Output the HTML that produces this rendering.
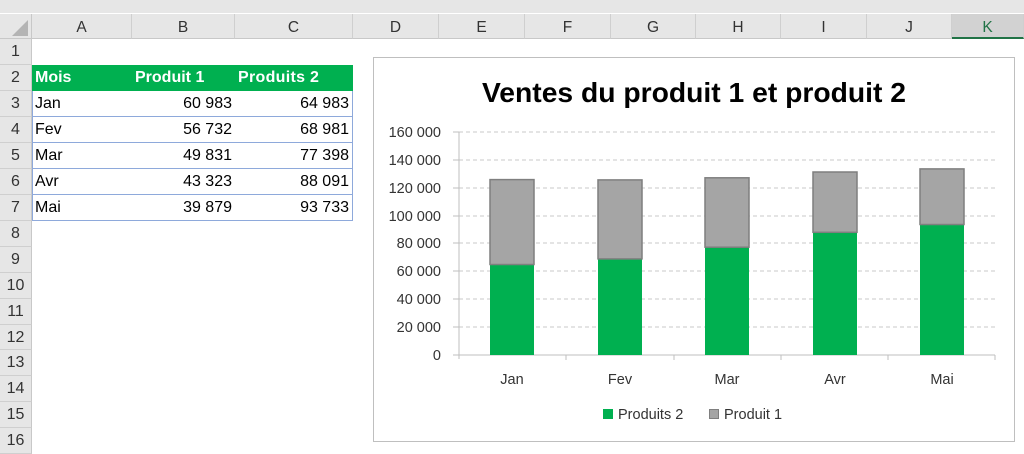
<!DOCTYPE html>
<html><head><meta charset="utf-8"><style>
*{margin:0;padding:0;box-sizing:border-box}
body{width:1024px;height:449px;overflow:hidden;background:#fff;font-family:"Liberation Sans",Arial,sans-serif;position:relative}
.abs{position:absolute}
.ch{position:absolute;top:14px;height:25px;background:#e6e6e6;border-right:1px solid #cfcfcf;font-size:15.5px;color:#333;text-align:center;line-height:27px;border-bottom:1px solid #c8c8c8}
.rh{position:absolute;left:0;width:32px;background:#e6e6e6;border-bottom:1px solid #cfcfcf;border-right:1px solid #c8c8c8;font-size:16px;color:#333;text-align:center}
.cell{position:absolute;font-size:16px;color:#000;line-height:26px;height:26px}
</style></head><body>
<div class="abs" style="left:0;top:0;width:1024px;height:14px;background:#e6e6e6;border-bottom:1px solid #fff"></div>
<div class="abs" style="left:0;top:14px;width:32px;height:25px;background:#e6e6e6;border-right:1px solid #c8c8c8;border-bottom:1px solid #c8c8c8"></div>
<svg class="abs" style="left:10px;top:20px" width="18" height="16"><polygon points="18,0 18,16 2,16" fill="#b4b4b4"/></svg>
<div class="ch" style="left:32px;width:100px">A</div>
<div class="ch" style="left:132px;width:103px">B</div>
<div class="ch" style="left:235px;width:118px">C</div>
<div class="ch" style="left:353px;width:86px">D</div>
<div class="ch" style="left:439px;width:86px">E</div>
<div class="ch" style="left:525px;width:86px">F</div>
<div class="ch" style="left:611px;width:85px">G</div>
<div class="ch" style="left:696px;width:85px">H</div>
<div class="ch" style="left:781px;width:86px">I</div>
<div class="ch" style="left:867px;width:85px">J</div>
<div class="ch" style="left:952px;width:72px;background:#d2d2d2;color:#217346;border-bottom:2px solid #217346">K</div>

<div class="rh" style="top:39px;height:26px;line-height:26px">1</div>
<div class="rh" style="top:65px;height:26px;line-height:26px">2</div>
<div class="rh" style="top:91px;height:26px;line-height:26px">3</div>
<div class="rh" style="top:117px;height:26px;line-height:26px">4</div>
<div class="rh" style="top:143px;height:26px;line-height:26px">5</div>
<div class="rh" style="top:169px;height:26px;line-height:26px">6</div>
<div class="rh" style="top:195px;height:26px;line-height:26px">7</div>
<div class="rh" style="top:221px;height:26px;line-height:26px">8</div>
<div class="rh" style="top:247px;height:26px;line-height:26px">9</div>
<div class="rh" style="top:273px;height:26px;line-height:26px">10</div>
<div class="rh" style="top:299px;height:26px;line-height:26px">11</div>
<div class="rh" style="top:325px;height:25px;line-height:25px">12</div>
<div class="rh" style="top:350px;height:26px;line-height:26px">13</div>
<div class="rh" style="top:376px;height:26px;line-height:26px">14</div>
<div class="rh" style="top:402px;height:26px;line-height:26px">15</div>
<div class="rh" style="top:428px;height:26px;line-height:26px">16</div>

<div class="abs" style="left:32px;top:65px;width:321px;height:26px;background:#00b050"></div>
<div class="abs" style="left:32px;top:91px;width:321px;height:130px;border:1px solid #8ea9db;border-top:none"></div>
<div class="abs" style="left:32px;top:116px;width:321px;border-top:1px solid #8ea9db"></div>
<div class="abs" style="left:32px;top:142px;width:321px;border-top:1px solid #8ea9db"></div>
<div class="abs" style="left:32px;top:168px;width:321px;border-top:1px solid #8ea9db"></div>
<div class="abs" style="left:32px;top:194px;width:321px;border-top:1px solid #8ea9db"></div>
<div class="cell" style="left:35px;top:65px;color:#fff;font-weight:bold">Mois</div>
<div class="cell" style="left:135px;top:65px;color:#fff;font-weight:bold">Produit 1</div>
<div class="cell" style="left:238px;top:65px;color:#fff;font-weight:bold;letter-spacing:0.3px">Produits 2</div>
<div class="cell" style="left:35px;top:91px">Jan</div>
<div class="cell" style="left:35px;top:117px">Fev</div>
<div class="cell" style="left:35px;top:143px">Mar</div>
<div class="cell" style="left:35px;top:169px">Avr</div>
<div class="cell" style="left:35px;top:195px">Mai</div>
<div class="cell" style="left:132px;width:100px;text-align:right;top:91px">60 983</div>
<div class="cell" style="left:132px;width:100px;text-align:right;top:117px">56 732</div>
<div class="cell" style="left:132px;width:100px;text-align:right;top:143px">49 831</div>
<div class="cell" style="left:132px;width:100px;text-align:right;top:169px">43 323</div>
<div class="cell" style="left:132px;width:100px;text-align:right;top:195px">39 879</div>
<div class="cell" style="left:235px;width:114px;text-align:right;top:91px">64 983</div>
<div class="cell" style="left:235px;width:114px;text-align:right;top:117px">68 981</div>
<div class="cell" style="left:235px;width:114px;text-align:right;top:143px">77 398</div>
<div class="cell" style="left:235px;width:114px;text-align:right;top:169px">88 091</div>
<div class="cell" style="left:235px;width:114px;text-align:right;top:195px">93 733</div>

<svg class="abs" style="left:0;top:0" width="1024" height="449" font-family="Liberation Sans, Arial, sans-serif">
<rect x="373.5" y="57.5" width="641" height="384" fill="#fff" stroke="#bfbfbf"/>
<text x="694" y="102" text-anchor="middle" font-size="27.5" font-weight="bold" fill="#000" textLength="424" lengthAdjust="spacingAndGlyphs">Ventes du produit 1 et produit 2</text>
<g stroke="#c8c8c8" stroke-dasharray="4,3">
<line x1="459" y1="132" x2="995" y2="132"/><line x1="459" y1="160" x2="995" y2="160"/><line x1="459" y1="188" x2="995" y2="188"/><line x1="459" y1="216" x2="995" y2="216"/><line x1="459" y1="243" x2="995" y2="243"/><line x1="459" y1="271" x2="995" y2="271"/><line x1="459" y1="299" x2="995" y2="299"/><line x1="459" y1="327" x2="995" y2="327"/>
</g>
<g stroke="#bfbfbf">
<line x1="459" y1="132" x2="459" y2="359"/><line x1="453" y1="355" x2="995" y2="355"/>
<line x1="453" y1="132" x2="459" y2="132"/><line x1="453" y1="160" x2="459" y2="160"/><line x1="453" y1="188" x2="459" y2="188"/><line x1="453" y1="216" x2="459" y2="216"/><line x1="453" y1="243" x2="459" y2="243"/><line x1="453" y1="271" x2="459" y2="271"/><line x1="453" y1="299" x2="459" y2="299"/><line x1="453" y1="327" x2="459" y2="327"/>
<line x1="566" y1="355" x2="566" y2="360"/><line x1="674" y1="355" x2="674" y2="360"/><line x1="781" y1="355" x2="781" y2="360"/><line x1="888" y1="355" x2="888" y2="360"/><line x1="995" y1="355" x2="995" y2="360"/>
</g>
<g font-size="14.5" fill="#333" text-anchor="end">
<text x="441" y="137">160 000</text><text x="441" y="165">140 000</text><text x="441" y="193">120 000</text><text x="441" y="221">100 000</text><text x="441" y="248">80 000</text><text x="441" y="276">60 000</text><text x="441" y="304">40 000</text><text x="441" y="332">20 000</text><text x="441" y="360">0</text>
</g>
<g fill="#00b050">
<rect x="490" y="264.5" width="44" height="90.5"/><rect x="598" y="259" width="44" height="96"/><rect x="705" y="247" width="44" height="108"/><rect x="813" y="232" width="44" height="123"/><rect x="920" y="224.5" width="44" height="130.5"/>
</g>
<g fill="#a5a5a5" stroke="#7f7f7f" stroke-width="1.5">
<rect x="490" y="179.6" width="44" height="84.9"/><rect x="598" y="179.9" width="44" height="79"/><rect x="705" y="177.8" width="44" height="69.4"/><rect x="813" y="172" width="44" height="60.3"/><rect x="920" y="168.9" width="44" height="55.6"/>
</g>
<g font-size="14.5" fill="#333" text-anchor="middle">
<text x="512" y="384">Jan</text><text x="620" y="384">Fev</text><text x="727" y="384">Mar</text><text x="835" y="384">Avr</text><text x="942" y="384">Mai</text>
</g>
<rect x="603" y="409" width="10" height="10" fill="#00b050"/>
<text x="618" y="419" font-size="14.5" fill="#333">Produits 2</text>
<rect x="709.5" y="409.5" width="9" height="9" fill="#a5a5a5" stroke="#7f7f7f"/>
<text x="724" y="419" font-size="14.5" fill="#333">Produit 1</text>
</svg>
</body></html>
